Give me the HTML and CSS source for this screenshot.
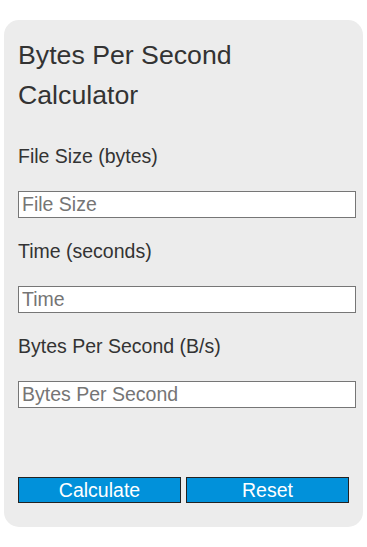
FILE: index.html
```html
<!DOCTYPE html>
<html>
<head>
<meta charset="utf-8">
<link rel="stylesheet" href="styles.css">
</head>
<body>
<div class="card">
  <h1 class="title">Bytes Per Second Calculator</h1>
  <label class="label" for="size">File Size (bytes)</label>
  <input class="field" id="size" type="text" placeholder="File Size">
  <label class="label" for="time">Time (seconds)</label>
  <input class="field" id="time" type="text" placeholder="Time">
  <label class="label" for="bps">Bytes Per Second (B/s)</label>
  <input class="field" id="bps" type="text" placeholder="Bytes Per Second">
  <div class="actions">
    <button class="btn" type="button">Calculate</button>
    <button class="btn" type="button">Reset</button>
  </div>
</div>
</body>
</html>
```
FILE: styles.css
```css
html, body {
  margin: 0;
  padding: 0;
  background: #ffffff;
}
body {
  font-family: "Liberation Sans", Arial, sans-serif;
  color: #333333;
}
.card {
  box-sizing: border-box;
  width: 359px;
  margin: 20px 0 0 4px;
  padding: 15px 7px 24px 14px;
  background: #ececec;
  border-radius: 15px;
  display: flex;
  flex-direction: column;
  align-items: flex-start;
}
.title {
  margin: 0 0 29px 0;
  font-size: 26.7px;
  line-height: 40px;
  font-weight: normal;
  color: #333333;
  width: 240px;
}
.label {
  display: block;
  font-size: 19.5px;
  line-height: 24px;
  margin-bottom: 23px;
  color: #333333;
}
.field {
  box-sizing: border-box;
  width: 338px;
  height: 27px;
  margin: 0 0 21px 0;
  padding: 0 3px;
  border: 1px solid #767676;
  border-radius: 0;
  background: #ffffff;
  font-family: "Liberation Sans", Arial, sans-serif;
  font-size: 19.5px;
  color: #333333;
  outline: none;
}
.field::placeholder {
  color: #757575;
}
.actions {
  display: flex;
  gap: 5px;
  margin-top: 48px;
}
.btn {
  box-sizing: border-box;
  width: 163px;
  height: 26px;
  padding: 0;
  border: 1px solid #222222;
  border-radius: 0;
  background: #0191da;
  color: #ffffff;
  font-family: "Liberation Sans", Arial, sans-serif;
  font-size: 19.5px;
  line-height: 24px;
}
```
